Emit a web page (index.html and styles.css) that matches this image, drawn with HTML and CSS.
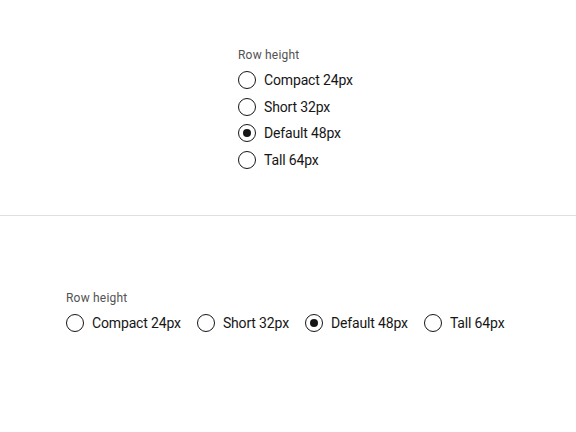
FILE: index.html
```html
<!DOCTYPE html>
<html>
<head>
<meta charset="utf-8">
<link rel="stylesheet" href="styles.css">
</head>
<body>
<section class="panel panel-top">
  <fieldset class="group vertical">
    <legend class="legend">Row height</legend>
    <div class="options">
      <label class="radio"><span class="circle"></span><span class="text">Compact 24px</span></label>
      <label class="radio"><span class="circle"></span><span class="text">Short 32px</span></label>
      <label class="radio"><span class="circle checked"></span><span class="text">Default 48px</span></label>
      <label class="radio"><span class="circle"></span><span class="text">Tall 64px</span></label>
    </div>
  </fieldset>
</section>
<section class="panel panel-bottom">
  <fieldset class="group horizontal">
    <legend class="legend">Row height</legend>
    <div class="options">
      <label class="radio"><span class="circle"></span><span class="text">Compact 24px</span></label>
      <label class="radio"><span class="circle"></span><span class="text">Short 32px</span></label>
      <label class="radio"><span class="circle checked"></span><span class="text">Default 48px</span></label>
      <label class="radio"><span class="circle"></span><span class="text">Tall 64px</span></label>
    </div>
  </fieldset>
</section>
</body>
</html>
```
FILE: styles.css
```css
html, body {
  margin: 0;
  padding: 0;
  background: #ffffff;
}
body {
  width: 576px;
  height: 432px;
  font-family: Roboto, "Noto Sans", sans-serif;
  color: #161616;
}
.panel {
  box-sizing: border-box;
}
.panel-top {
  height: 216px;
  padding: 47px 0 0 238px;
  border-bottom: 1px solid #e0e0e0;
}
.panel-bottom {
  padding: 74px 0 0 66px;
}
.group {
  border: 0;
  margin: 0;
  padding: 0;
  min-width: 0;
}
.legend {
  padding: 0;
  margin: 0 0 8px 0;
  font-size: 12px;
  line-height: 16px;
  color: #525252;
  letter-spacing: 0.2px;
}
.options {
  display: flex;
}
.vertical .options {
  flex-direction: column;
  gap: 8.5px;
}
.horizontal .options {
  flex-direction: row;
  gap: 16px;
}
.radio {
  display: flex;
  align-items: center;
  gap: 8px;
  height: 18px;
  font-size: 14px;
  line-height: 18px;
  letter-spacing: -0.15px;
}
.circle {
  box-sizing: border-box;
  width: 18px;
  height: 18px;
  border: 1px solid #161616;
  border-radius: 50%;
  display: flex;
  align-items: center;
  justify-content: center;
  flex: none;
}
.circle.checked::after {
  content: "";
  width: 8px;
  height: 8px;
  border-radius: 50%;
  background: #161616;
}
```
